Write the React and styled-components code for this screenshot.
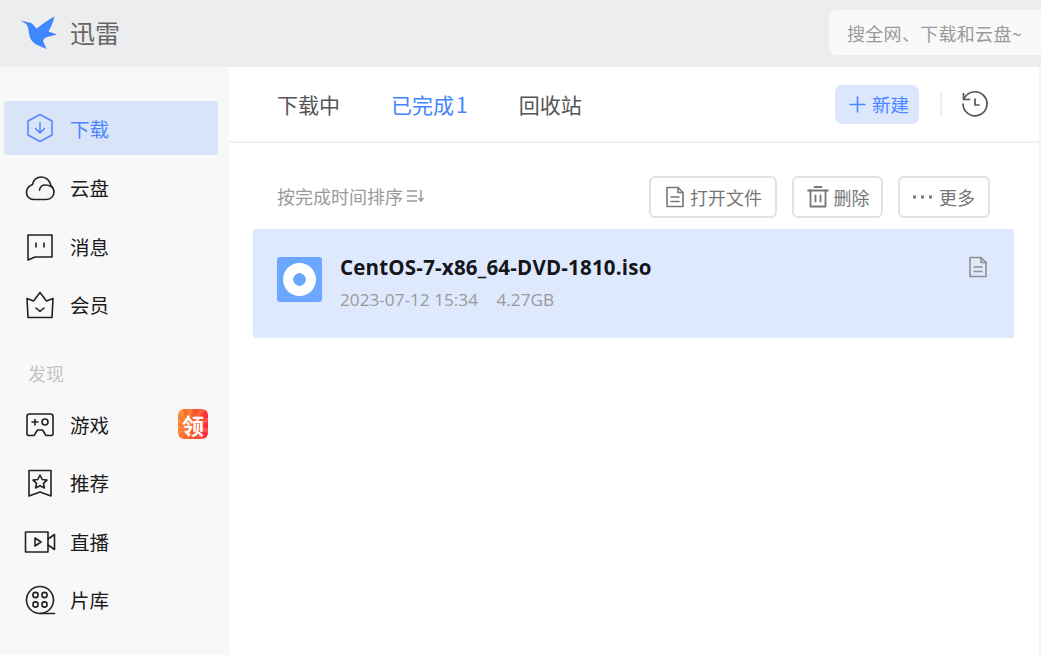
import React from "react";
import styled, { createGlobalStyle } from "styled-components";

const Global = createGlobalStyle`
  html, body { margin: 0; padding: 0; height: 100%; overflow: hidden; background: #fff; }
  #root { height: 100%; }
  * { box-sizing: border-box; }
  body { font-family: "Noto Sans CJK SC", "Noto Sans", sans-serif; }
`;

const Page = styled.div`
  width: 1041px;
  height: 655px;
  display: flex;
  flex-direction: column;
  overflow: hidden;
`;
const Header = styled.header`
  height: 67px;
  flex: none;
  background: #ecedef;
  display: flex;
  align-items: center;
  justify-content: space-between;
  padding-left: 20px;
`;
const Brand = styled.div`
  display: flex;
  align-items: center;
  gap: 12px;
`;
const BrandName = styled.span`
  font-size: 25px;
  line-height: 34px;
  color: #666;
  font-weight: 400;
  margin-top: -4px;
`;
const Search = styled.div`
  width: 212px;
  height: 45px;
  margin-bottom: 2px;
  background: #f9f9f9;
  border-radius: 8px 0 0 8px;
  display: flex;
  align-items: center;
  padding-left: 18px;
  font-size: 18px;
  letter-spacing: 0.3px;
  color: #9a9a9a;
  white-space: nowrap;
`;
const Body = styled.div`
  flex: 1;
  display: flex;
  min-height: 0;
`;
const Sidebar = styled.nav`
  width: 229px;
  flex: none;
  background: #f8f8f8;
  padding: 34px 11px 0 4px;
`;
const NavItem = styled.div`
  height: ${p => (p.$active ? "54px" : "58.4px")};
  margin-bottom: ${p => (p.$active ? "4px" : "0")};
  display: flex;
  align-items: center;
  padding-left: 20px;
  gap: 14px;
  border-radius: 3px;
  font-size: 19.5px;
  color: ${p => (p.$active ? "#4a86ff" : "#1a1a1a")};
  background: ${p => (p.$active ? "#d9e4f8" : "transparent")};
`;
const IconSlot = styled.span`
  width: 32px;
  height: 32px;
  flex: none;
  display: flex;
  align-items: center;
  justify-content: center;
`;
const NavLabel = styled.span`
  flex: 1;
  line-height: 26px;
  padding-top: ${p => (p.$active ? "2px" : "0")};
`;
const Section = styled.div`
  height: 54.5px;
  padding: 19px 0 0 24px;
  font-size: 18px;
  line-height: 26px;
  color: #c4c4c4;
  margin-top: 7px;
`;
const Badge = styled.span`
  width: 30px;
  height: 30px;
  border-radius: 6px;
  background:
    repeating-conic-gradient(from 0deg at 35% 65%, rgba(255, 220, 120, 0.22) 0 12deg, transparent 12deg 30deg),
    linear-gradient(100deg, #fb8a2c 0%, #fb4e2a 55%, #fd1f45 100%);
  color: #fff;
  font-size: 22px;
  line-height: 30px;
  font-weight: 700;
  text-align: center;
  margin: -2px 10px 0 0;
`;
const Main = styled.main`
  flex: 1;
  min-width: 0;
  display: flex;
  flex-direction: column;
  border-right: 2px solid #f3f3f3;
  background: #fff;
`;
const TabBar = styled.div`
  height: 76px;
  flex: none;
  border-bottom: 2px solid #f0f0f0;
  display: flex;
  align-items: center;
  padding: 0 50px 0 48px;
`;
const Tabs = styled.div`
  flex: 1;
  display: flex;
  gap: 51px;
`;
const Tab = styled.span`
  font-size: 21px;
  line-height: 30px;
  color: ${p => (p.$active ? "#3f85ff" : "#555")};
`;
const TabCount = styled.span`
  margin-left: 2px;
`;
const NewButton = styled.button`
  width: 84px;
  height: 39px;
  border: 0;
  border-radius: 7px;
  background: #dce7fe;
  color: #4a86ff;
  font: inherit;
  font-size: 18.5px;
  display: flex;
  align-items: center;
  justify-content: center;
  gap: 6px;
  padding: 0 0 0 4px;
`;
const Divider = styled.span`
  width: 2px;
  height: 24px;
  background: #eeeeee;
  margin: 0 19px 0 21px;
`;
const HistoryIcon = styled.span`
  width: 28px;
  height: 28px;
  display: flex;
`;
const Toolbar = styled.div`
  height: 86px;
  flex: none;
  display: flex;
  align-items: flex-start;
  padding: 33px 49px 0 48px;
`;
const SortLabel = styled.div`
  flex: 1;
  height: 40px;
  display: flex;
  align-items: center;
  gap: 3px;
  font-size: 18px;
  color: #999;
`;
const ToolButton = styled.button`
  height: 42px;
  width: ${p => p.$w}px;
  margin-left: ${p => p.$gap}px;
  border: 2px solid #e1e1e1;
  border-radius: 6px;
  background: #fff;
  color: #777;
  font: inherit;
  font-size: 18px;
  display: flex;
  align-items: center;
  justify-content: center;
  gap: ${p => p.$inner || 4}px;
  padding: 0;
`;
const Row = styled.div`
  margin: 0 25px 0 24px;
  height: 109px;
  border-radius: 3px;
  background: #dfe9fd;
  display: flex;
  align-items: flex-start;
  padding: 28px 25px 0 24px;
`;
const FileThumb = styled.div`
  width: 45px;
  height: 45px;
  flex: none;
  border-radius: 3px;
  background: #6ba7ff;
  display: flex;
  align-items: center;
  justify-content: center;
`;
const Disc = styled.div`
  width: 33px;
  height: 33px;
  border-radius: 50%;
  background: radial-gradient(circle, #6ba7ff 0 6px, #fff 6.5px);
`;
const FileInfo = styled.div`
  flex: 1;
  margin-left: 18px;
  margin-top: -4px;
`;
const FileName = styled.div`
  font-family: "Open Sans", "Noto Sans", sans-serif;
  font-size: 20.5px;
  letter-spacing: 0.2px;
  line-height: 28px;
  font-weight: 700;
  color: #14161a;
`;
const FileMeta = styled.div`
  display: flex;
  gap: 18.5px;
  margin-top: 7px;
  font-family: "Open Sans", "Noto Sans", sans-serif;
  font-size: 17.2px;
  line-height: 24px;
  color: #9a9a9a;
`;
const RowIcon = styled.span`
  width: 22px;
  height: 24px;
  flex: none;
  display: flex;
  margin-top: -1px;
`;

const Line = ({ children, size = 32, vb = 32, color = "#222", w = 1.6 }) => (
  <svg width={size} height={size} viewBox={`0 0 ${vb} ${vb}`} fill="none" stroke={color} strokeWidth={w} strokeLinecap="round" strokeLinejoin="round">
    {children}
  </svg>
);

const Bird = () => (
  <svg width="38" height="36" viewBox="0 0 38 36">
    <path d="M0.5 4.5 L11 7 C13 8 15 11 16.5 12.5 C22 8.5 28 4 34.5 0.5 C33 6 31.5 10.5 28.5 15.5 L37 18.5 L27 21 C24.5 22 23.5 23 23 25 L26.5 33 C21 30.5 15 28.5 12 25 C8 20 9.5 12 6.5 8.5 C5 7 3 6 0.5 4.5 Z" fill="#3f86ff" />
  </svg>
);
const Download = () => (
  <Line color="#4f86ff" w={1.5}>
    <path d="M16 2.5 L28 9 V23 L16 29.5 L4 23 V9 Z" />
    <path d="M16 10.5 V20.5 M11.5 16.5 L16 21 L20.5 16.5" />
  </Line>
);
const Cloud = () => (
  <Line>
    <path d="M9.5 27.5 H22.5 C27 27.5 30 24 30 20 C30 17.5 29 15.5 27 14 C26 8.5 22 5 17.5 5 C13 5 9.5 8 8.5 12.5 C5 14 2.5 16.5 2.5 20.5 C2.5 24.5 5.5 27.5 9.5 27.5 Z" />
    <path d="M15.5 18 C16 15 18.5 13 21.5 13 C23.5 13 25.5 13.5 27 14.5" />
  </Line>
);
const Message = () => (
  <Line>
    <path d="M4 4 H28 V26 H11 L4 29 Z" />
    <path d="M12 12 V16 M20 12 V16" />
  </Line>
);
const Crown = () => (
  <Line>
    <path d="M3 9.5 L9.5 12 L16 3.5 L22.5 12 L29 9.5 L28 28.5 H4 Z" />
    <path d="M12 19 L16 22.5 L20 19" />
  </Line>
);
const Game = () => (
  <Line>
    <path d="M5.5 5 H26.5 C28 5 29 6 29 7.5 V25 C29 26 28 26.5 26.5 26.5 H22 L18.5 21 H13.5 L10 26.5 H5.5 C4 26.5 3 26 3 25 V7.5 C3 6 4 5 5.5 5 Z" />
    <path d="M11 10.5 V16 M8 13 H14" />
    <circle cx="21" cy="13" r="3" />
  </Line>
);
const Star = () => (
  <Line>
    <path d="M5 3.5 H27 V29 L16 25 L5 29 Z" />
    <path d="M16 8 L18.2 12.5 L23 13.1 L19.5 16.4 L20.4 21 L16 18.8 L11.6 21 L12.5 16.4 L9 13.1 L13.8 12.5 Z" />
  </Line>
);
const Video = () => (
  <Line>
    <path d="M1.5 6 H24 V26 H1.5 Z" />
    <path d="M24 13 L30.5 8.5 V23.5 L24 19" />
    <path d="M11 12 L17 16 L11 20 Z" />
  </Line>
);
const Film = () => (
  <Line>
    <circle cx="16" cy="16" r="13.5" />
    <circle cx="11.5" cy="11" r="2.6" />
    <circle cx="20.5" cy="11" r="2.6" />
    <circle cx="11.5" cy="20.5" r="2.6" />
    <circle cx="20.5" cy="20.5" r="2.6" />
    <path d="M16 29.5 H30.5" />
  </Line>
);
const Doc = ({ color = "#777", size = 22 }) => (
  <Line size={size} vb={22} color={color} w={1.6}>
    <path d="M3 1.5 H14 L19 6.5 V20.5 H3 Z" />
    <path d="M14 1.5 V6.5 H19" />
    <path d="M7 11 H15 M7 15.5 H15" />
  </Line>
);
const Trash = () => (
  <Line size={24} vb={24} color="#777" w={1.8}>
    <path d="M2 5.5 H22" />
    <path d="M8.5 2 H15.5" />
    <path d="M4.5 5.5 V21.5 H19.5 V5.5" />
    <path d="M9.5 10.5 V16.5 M14.5 10.5 V16.5" />
  </Line>
);
const Dots = () => (
  <svg width="19" height="6" viewBox="0 0 19 6">
    <rect x="0" y="1.5" width="3" height="3" fill="#777" />
    <rect x="8" y="1.5" width="3" height="3" fill="#777" />
    <rect x="16" y="1.5" width="3" height="3" fill="#777" />
  </svg>
);
const Plus = () => (
  <Line size={17} vb={17} color="#4a86ff" w={1.6}>
    <path d="M8.5 1 V16 M1 8.5 H16" />
  </Line>
);
const History = () => (
  <Line size={28} vb={28} color="#555" w={1.7}>
    <path d="M3 9 A12 12 0 1 1 2 14" />
    <path d="M2.5 3.5 V9.5 H8.5" stroke="#555" />
    <path d="M14 9 V15 H18" />
  </Line>
);
const SortIcon = () => (
  <svg width="18" height="14" viewBox="0 0 18 14" fill="none" stroke="#999" strokeWidth="1.5">
    <path d="M1 2 H11 M1 7 H11 M1 12 H11" />
    <path d="M15 1 V12 M12.5 9 L15 12 L17.5 9" />
  </svg>
);

const primary = [
  { label: "云盘", icon: <Cloud /> },
  { label: "消息", icon: <Message /> },
  { label: "会员", icon: <Crown /> },
];
const discover = [
  { label: "游戏", icon: <Game />, badge: "领" },
  { label: "推荐", icon: <Star /> },
  { label: "直播", icon: <Video /> },
  { label: "片库", icon: <Film /> },
];

export default function App() {
  return (
    <Page>
      <Global />
      <Header>
        <Brand>
          <Bird />
          <BrandName>迅雷</BrandName>
        </Brand>
        <Search>搜全网、下载和云盘~</Search>
      </Header>
      <Body>
        <Sidebar>
          <NavItem $active>
            <IconSlot><Download /></IconSlot>
            <NavLabel $active>下载</NavLabel>
          </NavItem>
          {primary.map(i => (
            <NavItem key={i.label}>
              <IconSlot>{i.icon}</IconSlot>
              <NavLabel>{i.label}</NavLabel>
            </NavItem>
          ))}
          <Section>发现</Section>
          {discover.map(i => (
            <NavItem key={i.label}>
              <IconSlot>{i.icon}</IconSlot>
              <NavLabel>{i.label}</NavLabel>
              {i.badge && <Badge>{i.badge}</Badge>}
            </NavItem>
          ))}
        </Sidebar>
        <Main>
          <TabBar>
            <Tabs>
              <Tab>下载中</Tab>
              <Tab $active>已完成<TabCount>1</TabCount></Tab>
              <Tab>回收站</Tab>
            </Tabs>
            <NewButton><Plus />新建</NewButton>
            <Divider />
            <HistoryIcon><History /></HistoryIcon>
          </TabBar>
          <Toolbar>
            <SortLabel>按完成时间排序<SortIcon /></SortLabel>
            <ToolButton $w={128} $gap={0}><Doc />打开文件</ToolButton>
            <ToolButton $w={91} $gap={15}><Trash />删除</ToolButton>
            <ToolButton $w={92} $gap={15} $inner={7}><Dots />更多</ToolButton>
          </Toolbar>
          <Row>
            <FileThumb><Disc /></FileThumb>
            <FileInfo>
              <FileName>CentOS-7-x86_64-DVD-1810.iso</FileName>
              <FileMeta>
                <span>2023-07-12 15:34</span>
                <span>4.27GB</span>
              </FileMeta>
            </FileInfo>
            <RowIcon><Doc color="#8f8f8f" /></RowIcon>
          </Row>
        </Main>
      </Body>
    </Page>
  );
}
